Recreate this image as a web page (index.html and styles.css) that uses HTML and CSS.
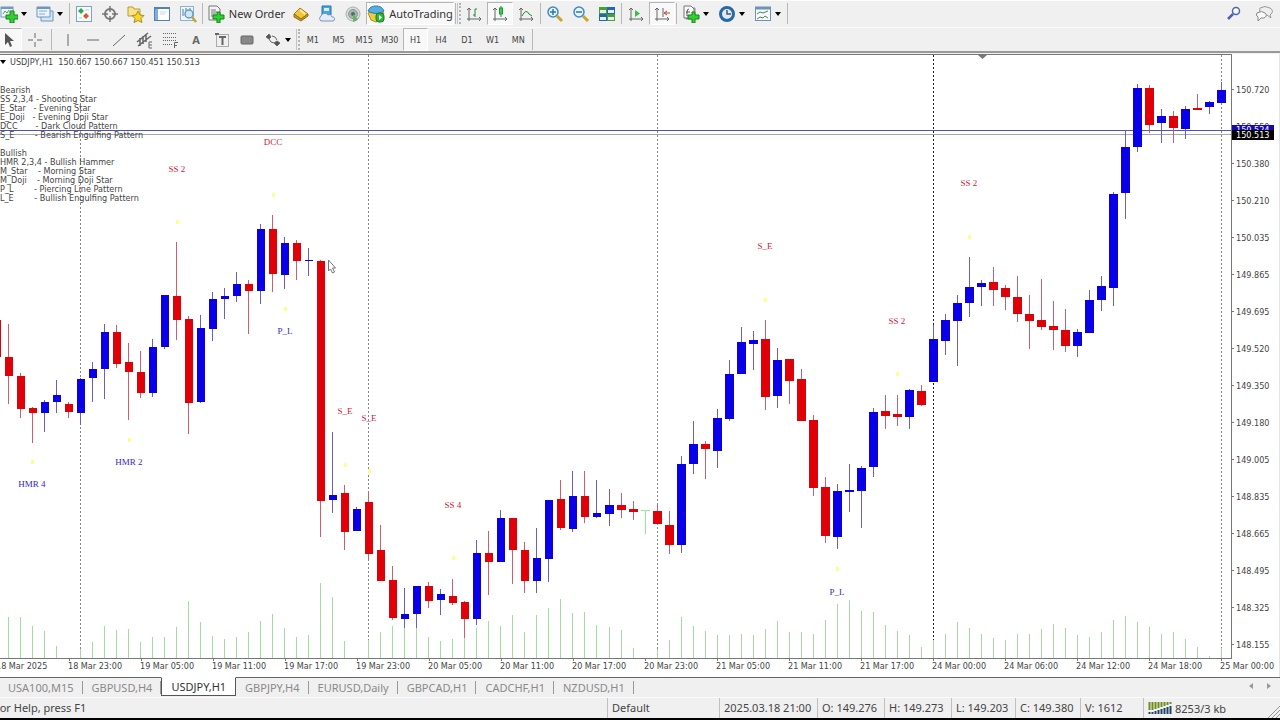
FILE: index.html
```html
<!DOCTYPE html>
<html lang="en">

<head>
	<meta charset="utf-8">
	<title>USDJPY,H1</title>
	<link rel="stylesheet" href="styles.css">
</head>

<body>
	<div class="toolbar toolbar-main">
		<div class="group">
			<button class="tool drop" aria-label="New chart">
				<svg class="icon" viewBox="0 0 18 18"><rect x="1" y="2" width="12" height="10" fill="#eef6fc" stroke="#6f9cc0"/><path d="M1 3h12" stroke="#6f9cc0" stroke-width="2"/><path d="M3 9l2-3 2 2 2-3" fill="none" stroke="#5b9a4a"/><path d="M10 6h4v4h4v4h-4v4h-4v-4H6v-4h4z" fill="#2fd02f" stroke="#14851c"/></svg>
				<svg class="arrow" viewBox="0 0 6 4"><path d="M0 0h6L3 4z"/></svg>
			</button>
			<button class="tool drop" aria-label="Profiles">
				<svg class="icon" viewBox="0 0 18 18"><path d="M5 6h12v10H5z" fill="#d4e6f5" stroke="#6b97bd"/><path d="M1 2h13v10H1z" fill="#eaf4fc" stroke="#6b97bd"/><path d="M1 3h13" stroke="#6b97bd" stroke-width="2"/><path d="M3 6h8M3 9h6" stroke="#8aabc7"/></svg>
				<svg class="arrow" viewBox="0 0 6 4"><path d="M0 0h6L3 4z"/></svg>
			</button>
		</div>
		<span class="sep"></span>
		<div class="group">
			<button class="tool" aria-label="Market Watch"><svg class="icon" viewBox="0 0 18 18"><rect x="1.500" y="1.500" width="15" height="15" fill="#f8fcff" stroke="#7ba5c8"/><path d="M6 3l3 3-3 3-3-3z" fill="#35a84a"/><path d="M11 8l3 3-3 3-3-3z" fill="#e2502c"/><path d="M10 5h4M4 13h3" stroke="#b8cfe0"/></svg></button>
			<button class="tool" aria-label="Data Window"><svg class="icon" viewBox="0 0 18 18"><circle cx="9" cy="9" r="5" fill="none" stroke="#777" stroke-width="2"/><path d="M9 1v6M9 11v6M1 9h6M11 9h6" stroke="#777" stroke-width="1.500"/></svg></button>
			<button class="tool" aria-label="Navigator"><svg class="icon" viewBox="0 0 18 18"><path d="M1 2h5l1 2h6v7H1z" fill="#f6e38c" stroke="#bc9a38"/><path d="M11 6l2 4 4 .5-3 3 1 4-4-2-4 2 1-4-3-3 4-.5z" fill="#f5d62b" stroke="#b08b16"/></svg></button>
			<button class="tool" aria-label="Terminal"><svg class="icon" viewBox="0 0 18 18"><rect x="1.500" y="2.500" width="15" height="13" fill="#fff" stroke="#4d83b5"/><path d="M1 3h16" stroke="#4d83b5" stroke-width="2"/><path d="M2 4h3v11H2z" fill="#7fb0dc"/><path d="M7 7h7M7 9h5" stroke="#c6d8e6"/></svg></button>
			<button class="tool" aria-label="Strategy Tester"><svg class="icon" viewBox="0 0 18 18"><rect x="1.500" y="1.500" width="13" height="14" fill="#eef5fb" stroke="#8fb1cc"/><path d="M4 4v7M7 3v3M11 3v3" stroke="#4e7fa8"/><circle cx="10" cy="9" r="4" fill="#cfe6f5" stroke="#6c9abd" stroke-width="1.500"/><path d="M13 12l4 5" stroke="#c7a338" stroke-width="2.500"/></svg></button>
		</div>
		<span class="sep"></span>
		<button class="tool labelled"><svg class="icon" viewBox="0 0 18 18"><path d="M2 1h8l3 3v11H2z" fill="#f4f4f4" stroke="#777"/><path d="M4 5h5M4 7h6M4 9h5M4 11h3" stroke="#777"/><path d="M10 7h3v3h4v4h-4v4h-3v-4H6v-4h4z" fill="#2fd02f" stroke="#14851c"/></svg>New Order</button>
		<div class="group">
			<button class="tool" aria-label="MetaEditor"><svg class="icon" viewBox="0 0 18 18"><path d="M2 9l6-6 8 6-7 5z" fill="#efc63a" stroke="#a87d16"/><path d="M2 9v3l7 4 7-5V9l-7 5z" fill="#c9981f" stroke="#94701a"/><path d="M8 5l5 4" stroke="#fbe99a" stroke-width="2"/></svg></button>
			<button class="tool" aria-label="Options"><svg class="icon" viewBox="0 0 18 18"><path d="M4 1h9v9H4z" fill="#4aa3e0" stroke="#2673ad"/><path d="M6 3h5v3H6z" fill="#d3edfc"/><path d="M3 16a3 3 0 0 1 0-5 4 4 0 0 1 7-1 3 3 0 0 1 4 2 2 2 0 0 1 1 4z" fill="#e4edf6" stroke="#7896b8"/></svg></button>
			<button class="tool" aria-label="Signals"><svg class="icon" viewBox="0 0 18 18"><circle cx="9" cy="9" r="7" fill="#d7dcdc" stroke="#aab2b2"/><circle cx="9" cy="9" r="4.500" fill="#a7b4b0" stroke="#8c9895"/><circle cx="9" cy="9" r="2" fill="#4a6b72"/><path d="M9 9v8a7 7 0 0 0 5-3z" fill="#6db06a"/></svg></button>
		</div>
		<button class="tool labelled auto pressed"><svg class="icon" viewBox="0 0 18 18"><path d="M1 8l8-3 8 3-3 7-5 2-5-2z" fill="#f0cb3c" stroke="#b28f22"/><path d="M1 6q2-5 8-5t8 5q-8 5-16 0z" fill="#57aee0" stroke="#2d7ab0"/><rect x="9" y="8" width="8" height="9" rx="3" fill="#2eb53a" stroke="#16802a"/><path d="M12 10v5l3-2.500z" fill="#fff"/></svg>AutoTrading</button>
		<span class="sep"></span>
		<span class="grip"></span>
		<div class="group">
			<button class="tool" aria-label="Bar Chart"><svg class="icon line" viewBox="0 0 18 18"><path d="M4 3v13M2 14h14M2 5l2-2 2 2M14 12l2 2-2 2"/><path class="green" d="M10 4v8M12 4h-2M10 10H8"/></svg></button>
			<button class="tool pressed" aria-label="Candlesticks"><svg class="icon line" viewBox="0 0 18 18"><path d="M4 3v13M2 14h14M2 5l2-2 2 2M14 12l2 2-2 2"/><path class="green" d="M10 1v11"/><rect x="8.500" y="3" width="3" height="6" fill="#36cf46" stroke="#1b9c2b"/></svg></button>
			<button class="tool" aria-label="Line Chart"><svg class="icon line" viewBox="0 0 18 18"><path d="M4 3v13M2 14h14M2 5l2-2 2 2M14 12l2 2-2 2"/><path class="green" d="M5 11q4-8 7-2l3 2"/></svg></button>
		</div>
		<span class="sep"></span>
		<div class="group">
			<button class="tool" aria-label="Zoom In"><svg class="icon" viewBox="0 0 18 18"><path d="M11 11l5 5" stroke="#c9a52e" stroke-width="3"/><circle cx="7" cy="7" r="5" fill="#e7f4fd" stroke="#3f8ac4" stroke-width="1.500"/><path d="M4 7h6M7 4v6" stroke="#2878b8" stroke-width="1.500"/></svg></button>
			<button class="tool" aria-label="Zoom Out"><svg class="icon" viewBox="0 0 18 18"><path d="M11 11l5 5" stroke="#c9a52e" stroke-width="3"/><circle cx="7" cy="7" r="5" fill="#e7f4fd" stroke="#3f8ac4" stroke-width="1.500"/><path d="M4 7h6" stroke="#2878b8" stroke-width="1.500"/></svg></button>
			<button class="tool" aria-label="Tile Windows"><svg class="icon" viewBox="0 0 18 18"><path d="M1 2h8v7H1zM9 9h8v7H9z" fill="#48a03a"/><path d="M9 2h8v7H9zM1 9h8v7H1z" fill="#2c64b4"/><path d="M2 5h6v3H2zM10 5h6v3h-6zM2 12h6v3H2zM10 12h6v3h-6z" fill="#e5f2ea"/></svg></button>
		</div>
		<span class="sep"></span>
		<div class="group">
			<button class="tool" aria-label="Auto Scroll"><svg class="icon line" viewBox="0 0 18 18"><path d="M4 3v13M2 14h14M2 5l2-2 2 2M14 12l2 2-2 2"/><path d="M8 5v7l5-3.500z" fill="#36c046" stroke="none"/></svg></button>
			<button class="tool pressed" aria-label="Chart Shift"><svg class="icon line" viewBox="0 0 18 18"><path d="M4 3v13M2 14h14M2 5l2-2 2 2M14 12l2 2-2 2M10 3v9"/><path d="M17 8h-5M14 6l-3 2 3 2" stroke="#b0452c"/></svg></button>
		</div>
		<span class="sep"></span>
		<div class="group">
			<button class="tool drop" aria-label="Indicators">
				<svg class="icon" viewBox="0 0 18 18"><path d="M4 3h9v11H4z" fill="#ddd" stroke="#888"/><path d="M2 1h7l3 3v9H2z" fill="#fafafa" stroke="#777"/><path d="M7 4q-2 0-2 3v4M4 7h4" fill="none" stroke="#555"/><path d="M10 7h3v3h4v4h-4v4h-3v-4H6v-4h4z" fill="#2fd02f" stroke="#14851c"/></svg>
				<svg class="arrow" viewBox="0 0 6 4"><path d="M0 0h6L3 4z"/></svg>
			</button>
			<button class="tool drop" aria-label="Periods">
				<svg class="icon" viewBox="0 0 18 18"><circle cx="9" cy="9" r="6.500" fill="#dcecf8" stroke="#2668a8" stroke-width="3"/><path d="M9 5v4h4" fill="none" stroke="#555" stroke-width="1.500"/></svg>
				<svg class="arrow" viewBox="0 0 6 4"><path d="M0 0h6L3 4z"/></svg>
			</button>
			<button class="tool drop" aria-label="Templates">
				<svg class="icon" viewBox="0 0 18 18"><rect x="1.500" y="2.500" width="15" height="13" fill="#f6fafd" stroke="#6a93b5"/><path d="M1 3h16" stroke="#6a93b5" stroke-width="3"/><path d="M3 9l3-2 3 1 5-2M3 14l3-2 3 1 2-2 3 2" fill="none" stroke="#56805a"/></svg>
				<svg class="arrow" viewBox="0 0 6 4"><path d="M0 0h6L3 4z"/></svg>
			</button>
		</div>
		<span class="sep"></span>
		<div class="group right">
			<button class="tool" aria-label="Search"><svg class="icon" viewBox="0 0 18 18"><circle cx="11" cy="6" r="3.500" fill="#fff" stroke="#4c62b8" stroke-width="1.500"/><path d="M8 9l-5 5" stroke="#4c62b8" stroke-width="2.500"/></svg></button>
			<button class="tool" aria-label="Chat"><svg class="icon" viewBox="0 0 18 18"><path d="M5 3q5-3 10 0t0 7l1 3-4-3Q3 10 5 3z" fill="#eee" stroke="#999"/><path d="M2 8q5-3 8 0t-1 5H6l-3 3v-4q-3-2-1-4z" fill="#fafafa" stroke="#888"/></svg></button>
		</div>
	</div>

	<div class="toolbar toolbar-draw">
		<div class="group">
			<button class="tool pressed" aria-label="Cursor"><svg class="icon" viewBox="0 0 18 18"><path d="M5 2v12l3-3 2 5 2-1-2-5h4z" fill="#555"/></svg></button>
			<button class="tool" aria-label="Crosshair"><svg class="icon line" viewBox="0 0 18 18"><path d="M9 2v5M9 11v5M2 9h5M11 9h5"/></svg></button>
		</div>
		<span class="sep wide"></span>
		<div class="group draw-tools">
			<button class="tool" aria-label="Vertical Line"><svg class="icon line" viewBox="0 0 18 18"><path d="M9 3v12"/></svg></button>
			<button class="tool" aria-label="Horizontal Line"><svg class="icon line" viewBox="0 0 18 18"><path d="M3 9h12"/></svg></button>
			<button class="tool" aria-label="Trendline"><svg class="icon line" viewBox="0 0 18 18"><path d="M3 15L15 4"/></svg></button>
			<button class="tool" aria-label="Equidistant Channel"><svg class="icon line" viewBox="0 0 18 18"><path d="M1 11L12 2M2 15L15 5M4 7v8M7 5v8M10 3v8" stroke-width="1.500"/><path d="M16 11h-3v6h3M13 14h3"/></svg></button>
			<button class="tool" aria-label="Fibonacci"><svg class="icon line" viewBox="0 0 18 18"><path stroke-dasharray="1 1" d="M2 2.500h14M2 6.500h14M2 9.500h14M2 13.500h9"/><path d="M13.500 17v-5.500H17M13 14.500h3"/></svg></button>
			<button class="tool letter" aria-label="Text">A</button>
			<button class="tool" aria-label="Text Label"><svg class="icon line" viewBox="0 0 18 18"><rect x="3.500" y="3.500" width="12" height="12" stroke-dasharray="1 1"/><path d="M2 3h4M6 6h7M9.500 6v8" stroke-width="2"/></svg></button>
			<button class="tool" aria-label="Rectangle"><svg class="icon" viewBox="0 0 18 18"><rect x="3" y="5" width="12" height="8" rx="1" fill="#888" stroke="#666"/></svg></button>
		</div>
		<button class="tool drop" aria-label="Arrows">
			<svg class="icon line" viewBox="0 0 18 18"><path d="M2 6l3-3 2 3-2 2zM10 12l3-2 3 2-3 3z" fill="#555"/><path d="M5 8l2 3 3 1M8 5l3 1 2 3"/></svg>
			<svg class="arrow" viewBox="0 0 6 4"><path d="M0 0h6L3 4z"/></svg>
		</button>
		<span class="grip"></span>
		<div class="group timeframes">
			<button class="tool">M1</button>
			<button class="tool">M5</button>
			<button class="tool">M15</button>
			<button class="tool">M30</button>
			<button class="tool pressed">H1</button>
			<button class="tool">H4</button>
			<button class="tool">D1</button>
			<button class="tool">W1</button>
			<button class="tool">MN</button>
		</div>
		<span class="sep"></span>
	</div>

	<main class="chart">
		<div class="plot">
			<svg id="candles" class="candles" role="img" aria-label="USDJPY hourly candles"></svg>
			<div class="quote"><svg class="arrow" viewBox="0 0 6 4"><path d="M0 0h6L3 4z"/></svg>USDJPY,H1&nbsp; 150.667 150.667 150.451 150.513</div>
			<pre class="legend">Bearish
SS 2,3,4 - Shooting Star
E_Star   - Evening Star
E_Doji   - Evening Doji Star
DCC       - Dark Cloud Pattern
S_E        - Bearish Engulfing Pattern

Bullish
HMR 2,3,4 - Bullish Hammer
M_Star    - Morning Star
M_Doji    - Morning Doji Star
P_L        - Piercing Line Pattern
L_E        - Bullish Engulfing Pattern</pre>
		</div>
		<div class="prices">
			<span>150.720</span>
			<span>150.550</span>
			<span>150.380</span>
			<span>150.210</span>
			<span>150.035</span>
			<span>149.865</span>
			<span>149.695</span>
			<span>149.520</span>
			<span>149.350</span>
			<span>149.180</span>
			<span>149.005</span>
			<span>148.835</span>
			<span>148.665</span>
			<span>148.495</span>
			<span>148.325</span>
			<span>148.155</span>
			<b class="mark ask">150.524</b>
			<b class="mark bid">150.513</b>
		</div>
		<div class="times">
			<span>18 Mar 2025</span>
			<span>18 Mar 23:00</span>
			<span>19 Mar 05:00</span>
			<span>19 Mar 11:00</span>
			<span>19 Mar 17:00</span>
			<span>19 Mar 23:00</span>
			<span>20 Mar 05:00</span>
			<span>20 Mar 11:00</span>
			<span>20 Mar 17:00</span>
			<span>20 Mar 23:00</span>
			<span>21 Mar 05:00</span>
			<span>21 Mar 11:00</span>
			<span>21 Mar 17:00</span>
			<span>24 Mar 00:00</span>
			<span>24 Mar 06:00</span>
			<span>24 Mar 12:00</span>
			<span>24 Mar 18:00</span>
			<span>25 Mar 00:00</span>
		</div>
	</main>

	<nav class="tabs">
		<button class="tab">USA100,M15</button>
		<button class="tab">GBPUSD,H4</button>
		<button class="tab active">USDJPY,H1</button>
		<button class="tab">GBPJPY,H4</button>
		<button class="tab">EURUSD,Daily</button>
		<button class="tab">GBPCAD,H1</button>
		<button class="tab">CADCHF,H1</button>
		<button class="tab">NZDUSD,H1</button>
		<div class="scrollers">
			<button aria-label="Scroll left"><svg viewBox="0 0 4 6"><path d="M4 0v6L0 3z"/></svg></button>
			<button aria-label="Scroll right"><svg viewBox="0 0 4 6"><path d="M0 0v6l4-3z"/></svg></button>
		</div>
	</nav>

	<footer class="status">
		<span class="help">For Help, press F1</span>
		<span>Default</span>
		<span>2025.03.18 21:00</span>
		<span>O: 149.276</span>
		<span>H: 149.273</span>
		<span>L: 149.203</span>
		<span>C: 149.380</span>
		<span>V: 1612</span>
		<span class="traffic">
			<svg viewBox="0 0 24 14"><path d="M1.500 1v8M4.500 1v8M7.500 1v7M10.500 1v6M13.500 1v5M16.500 1v4M19.500 1v3M22.500 1v2" stroke="#6f8a1e" stroke-width="2"/><path d="M1.500 11v2M4.500 11v2M7.500 10v3M10.500 9v4M13.500 8v5M16.500 7v6M19.500 6v7M22.500 5v8" stroke="#1f4664" stroke-width="2"/></svg>
			8253/3 kb
			<svg class="resize" viewBox="0 0 12 12"><path d="M0 12L12 0M4 12l8-8M8 12l4-4"/></svg>
		</span>
	</footer>

	<script src="script.js"></script>
</body>

</html>
```

FILE: styles.css
```css
* {
	box-sizing: border-box;
}

body {
	margin: 0;
	height: 100vh;
	display: flex;
	flex-direction: column;
	overflow: hidden;
	background-color: #f0f0f0;
	border-bottom: 2px solid #000;
	font-family: "Noto Sans", "Open Sans", sans-serif;
	font-size: 11px;
	color: #444;
}

button {
	font: inherit;
	color: inherit;
	background: none;
	border: 0;
	padding: 0;
	margin: 0;
}

/* toolbars */

.toolbar {
	display: flex;
	align-items: center;
	padding-right: 3px;
	flex-shrink: 0;
}

.toolbar-main {
	height: 27px;
	padding-bottom: 1px;
	border-top: 1px solid #fff;
}

.toolbar-draw {
	height: 26px;
	border-bottom: 2px solid #9c9896;
	border-top: 1px solid #fafafa;
}

.toolbar > :first-child {
	margin-left: -4px;
}

.group {
	display: flex;
}

.group.right {
	margin-left: auto;
	gap: 4px;
}

.tool {
	width: 26px;
	height: 23px;
	display: flex;
	align-items: center;
	justify-content: center;
	border: 1px solid transparent;
	flex-shrink: 0;
}

.tool.pressed {
	background-color: #f8f8f8;
	border-color: #b4b4b4 #fff #fff #b4b4b4;
}

.tool.drop {
	width: 36px;
	justify-content: flex-start;
	padding-left: 3px;
	gap: 3px;
}

.tool.labelled {
	width: 84px;
	gap: 4px;
	color: #333;
	white-space: nowrap;
}

.tool.auto {
	width: 88px;
}

.tool.letter {
	font-weight: bold;
	color: #666;
}

.icon {
	width: 18px;
	height: 18px;
	flex-shrink: 0;
}

.icon.line {
	fill: none;
	stroke: #666;
}

.icon .green {
	stroke: #1f8a35;
}

.arrow {
	width: 6px;
	height: 4px;
	flex-shrink: 0;
}

.sep {
	width: 1px;
	height: 21px;
	margin: 0 1px;
	background-color: #b8b8b8;
	flex-shrink: 0;
}

.sep.wide {
	margin: 0 3px;
}

.grip {
	width: 4px;
	height: 21px;
	border-left: 1px solid #c4c4c4;
	border-right: 2px dotted #b4b4b4;
	flex-shrink: 0;
}

.draw-tools {
	width: 205px;
}

.timeframes {
	width: 231px;
	font-family: "DejaVu Sans Condensed", "DejaVu Sans", sans-serif;
	font-size: 9px;
}

.draw-tools .tool,
.timeframes .tool {
	flex: 1;
	width: auto;
}

/* chart */

.chart {
	flex: 1;
	min-height: 0;
	margin-top: 1px;
	display: grid;
	grid-template-columns: 1fr 47px;
	grid-template-rows: 1fr 18px;
	background-color: #fff;
	border-right: 1px solid #e4e4e4;
	font-family: "DejaVu Sans Condensed", "DejaVu Sans", sans-serif;
	font-size: 9px;
}

.plot {
	position: relative;
	min-height: 0;
	overflow: hidden;
	border-top: 1px solid #777;
	border-right: 1px solid #777;
	border-bottom: 1px solid #777;
}

.candles {
	display: block;
	width: 100%;
	height: 100%;
}

.up {
	fill: #0a00e8;
	stroke: #0a00e8;
}

.down {
	fill: #e00008;
	stroke: #e00008;
}

.flat {
	fill: #90ee90;
	stroke: #90ee90;
}

.wick {
	fill: none;
	stroke: #6a60c0;
}

.wick.down {
	stroke: #c86070;
}

.wick.flat {
	stroke: #90ee90;
}

.body {
	stroke: none;
}

.volume {
	stroke: #a6d9a6;
}

.day {
	stroke: #888;
	stroke-dasharray: 2 2;
}

.day.week {
	stroke: #222;
}

.ask-line {
	stroke: #5252b0;
}

.bid-line {
	stroke: #a0a8b8;
}

.pattern {
	font-family: "Liberation Serif", serif;
	font-size: 9px;
	text-anchor: middle;
}

.bearish {
	fill: #d02040;
}

.bullish {
	fill: #3828b8;
}

.signal {
	fill: #ffff90;
}

.shift {
	fill: #777;
}

.pointer {
	fill: #fff;
	stroke: #777;
}

.quote {
	position: absolute;
	top: 1px;
	left: 0;
	display: flex;
	align-items: center;
	gap: 4px;
	line-height: 12px;
	white-space: nowrap;
}

.legend {
	position: absolute;
	top: 31px;
	left: 0;
	margin: 0;
	font-family: inherit;
	line-height: 9px;
}

.prices {
	position: relative;
	min-height: 0;
	padding-top: 17px;
}

.prices span {
	display: flex;
	align-items: center;
	height: 37px;
}

.prices span::before {
	content: "";
	width: 2px;
	height: 1px;
	margin-right: 2px;
	background-color: #777;
}

.mark {
	position: absolute;
	left: 0;
	width: 42px;
	height: 10px;
	padding-left: 4px;
	line-height: 10px;
	font-weight: normal;
	color: #fff;
}

.ask {
	top: 71px;
	background-color: #1408b0;
}

.bid {
	top: 76px;
	background-color: #000;
}

.times {
	grid-column: 1 / 3;
	display: flex;
	margin-left: -3px;
	overflow: hidden;
}

.times span {
	position: relative;
	width: 72px;
	flex-shrink: 0;
	line-height: 15px;
	text-indent: -1px;
	white-space: nowrap;
}

.times span::before {
	content: "";
	position: absolute;
	top: 0;
	left: 0;
	width: 1px;
	height: 2px;
	background-color: #777;
}

/* chart tabs */

.tabs {
	display: flex;
	height: 20px;
	flex-shrink: 0;
	margin-left: -1px;
	border-top: 1px solid #666;
	color: #8a8a8a;
}

.tab {
	height: 18px;
	padding: 0 9px;
	position: relative;
}

.tab::after {
	content: "";
	position: absolute;
	right: 0;
	top: 3px;
	width: 1px;
	height: 13px;
	background-color: #999;
}

.tab.active {
	height: 19px;
	margin-top: -1px;
	background-color: #fff;
	border: 1px solid #555;
	border-top-color: #fff;
	color: #333;
}

.tab.active::after {
	display: none;
}

.scrollers {
	display: flex;
	gap: 14px;
	margin-left: auto;
	padding-right: 9px;
	padding-bottom: 3px;
}

.scrollers svg {
	display: block;
	width: 4px;
	height: 6px;
	fill: #999;
}

/* status bar */

.status {
	display: grid;
	grid-template-columns: 1fr 112px 98px 67px 67px 64px 65px 63px 137px;
	height: 21px;
	flex-shrink: 0;
	border-top: 1px solid #fafafa;
	line-height: 19px;
	white-space: nowrap;
}

.status span {
	padding-left: 4px;
	border-left: 1px solid #c0c0c0;
}

.status .help {
	padding-left: 0;
	border-left: 0;
	text-indent: -6px;
	overflow: hidden;
}

.status .traffic {
	display: flex;
	align-items: center;
	gap: 3px;
}

.traffic svg {
	width: 24px;
	height: 14px;
}

.traffic .resize {
	width: 12px;
	height: 12px;
	margin-left: auto;
	align-self: flex-end;
	stroke: #999;
}
```

FILE: script.js
```js
var step = 12;
var firstX = -3;
var top0 = 55;

// direction, high, body top, body bottom, low, volume top
var candles = [
	['r', 320, 320, 357, 357, 0],
	['r', 324, 357, 376, 404, 617], ['r', 373, 376, 409, 418, 617], ['r', 407, 408, 413, 443, 626],
	['b', 400, 402, 413, 432, 631], ['b', 380, 395, 402, 413, 646], ['r', 402, 404, 412, 418, 0],
	['b', 378, 379, 413, 425, 649], ['b', 362, 369, 378, 402, 642], ['b', 324, 332, 369, 399, 626],
	['r', 325, 332, 364, 368, 630], ['r', 343, 362, 372, 420, 629], ['r', 351, 372, 393, 398, 642],
	['b', 339, 347, 393, 397, 637], ['b', 295, 295, 347, 349, 637], ['r', 242, 296, 320, 340, 627],
	['r', 316, 319, 403, 434, 601], ['b', 315, 328, 402, 403, 622], ['b', 292, 299, 329, 341, 636],
	['b', 288, 296, 299, 319, 639], ['b', 272, 284, 296, 302, 637], ['r', 280, 284, 291, 334, 632],
	['b', 224, 229, 291, 304, 621], ['r', 215, 229, 274, 292, 614], ['b', 237, 243, 275, 289, 628],
	['r', 240, 243, 261, 280, 637], ['b', 248, 260, 261, 276, 635], ['r', 260, 261, 501, 537, 583],
	['b', 432, 495, 500, 513, 597], ['r', 485, 493, 532, 550, 641], ['b', 507, 509, 531, 531, 0],
	['r', 492, 502, 554, 560, 640], ['r', 525, 550, 581, 581, 632], ['r', 566, 580, 618, 620, 626],
	['b', 588, 614, 619, 628, 628], ['b', 586, 586, 614, 628, 628], ['r', 582, 586, 601, 608, 637],
	['b', 589, 594, 600, 615, 641], ['r', 579, 596, 603, 605, 639], ['r', 601, 602, 619, 638, 638],
	['b', 540, 553, 619, 625, 628], ['r', 531, 553, 562, 595, 621], ['b', 510, 518, 562, 562, 626],
	['r', 518, 518, 550, 584, 615], ['r', 542, 550, 581, 593, 632], ['b', 528, 558, 581, 593, 615],
	['b', 500, 500, 559, 582, 608], ['r', 480, 499, 528, 530, 599], ['b', 471, 496, 529, 532, 613],
	['r', 471, 496, 517, 523, 612], ['b', 480, 513, 517, 518, 625], ['b', 489, 505, 514, 526, 627],
	['r', 493, 505, 510, 518, 630], ['r', 501, 509, 512, 520, 648], ['g', 511, 510, 511, 534, 0],
	['r', 505, 511, 524, 524, 649], ['r', 511, 525, 545, 554, 640], ['b', 456, 464, 545, 553, 617],
	['b', 421, 444, 464, 474, 626], ['r', 441, 444, 449, 479, 631], ['b', 409, 418, 451, 468, 635],
	['b', 360, 374, 419, 421, 635], ['b', 327, 342, 374, 374, 634], ['b', 331, 340, 344, 370, 635],
	['r', 320, 339, 397, 410, 629], ['b', 348, 360, 396, 408, 621], ['r', 359, 359, 381, 404, 632],
	['r', 369, 379, 421, 421, 632], ['r', 415, 420, 488, 496, 634], ['r', 477, 487, 536, 543, 620],
	['b', 484, 491, 537, 549, 604], ['b', 464, 490, 492, 512, 600], ['b', 466, 468, 491, 528, 611],
	['b', 408, 412, 467, 477, 612], ['r', 395, 411, 416, 429, 625], ['r', 395, 414, 417, 426, 631],
	['b', 389, 390, 417, 429, 635], ['r', 385, 391, 405, 406, 647], ['b', 325, 339, 382, 382, 640],
	['b', 314, 320, 341, 355, 634], ['b', 295, 303, 321, 366, 622], ['b', 257, 287, 303, 317, 628],
	['b', 280, 283, 287, 306, 634], ['r', 267, 282, 290, 306, 638], ['r', 285, 288, 297, 310, 640],
	['r', 276, 297, 314, 322, 634], ['r', 295, 314, 321, 349, 634], ['r', 279, 320, 327, 330, 629],
	['r', 301, 326, 330, 350, 624], ['r', 309, 330, 346, 352, 628], ['b', 329, 332, 346, 357, 635],
	['b', 290, 300, 333, 333, 637], ['b', 276, 286, 300, 311, 632], ['b', 192, 194, 288, 306, 620],
	['b', 130, 147, 193, 219, 616], ['b', 84, 88, 147, 152, 622], ['r', 85, 88, 125, 133, 627],
	['b', 109, 116, 123, 143, 634], ['r', 111, 116, 128, 143, 632], ['b', 106, 109, 129, 139, 639],
	['r', 94, 108, 110, 110, 647], ['b', 101, 102, 107, 114, 656], ['b', 82, 90, 103, 103, 648]
];

// text, side, x, text y, signal y
var patterns = [
	['HMR 4', 'bullish', 32, 484, 462], ['HMR 2', 'bullish', 129, 462, 440],
	['SS 2', 'bearish', 177, 169, 222], ['DCC', 'bearish', 273, 142, 195],
	['P_L', 'bullish', 285, 331, 309], ['S_E', 'bearish', 345, 411, 465],
	['S_E', 'bearish', 369, 418, 471], ['SS 4', 'bearish', 453, 505, 558],
	['S_E', 'bearish', 765, 246, 300], ['P_L', 'bullish', 837, 592, 569],
	['SS 2', 'bearish', 897, 321, 374], ['SS 2', 'bearish', 969, 183, 237]
];

var days = [80, 368, 657, 933, 1221];
var names = { r: 'down', b: 'up', g: 'flat' };
var svg = document.getElementById('candles');

function draw(tag, cls, attrs) {
	var el = document.createElementNS('http://www.w3.org/2000/svg', tag);
	el.setAttribute('class', cls);
	for (var key in attrs) {
		el.setAttribute(key, attrs[key]);
	}
	svg.appendChild(el);
	return el;
}

function vertical(cls, x, y1, y2) {
	draw('line', cls, { x1: x + 0.5, x2: x + 0.5, y1: y1 - top0, y2: y2 - top0 });
}

function horizontal(cls, y) {
	draw('line', cls, { x1: 0, x2: '100%', y1: y - top0 + 0.5, y2: y - top0 + 0.5 });
}

for (var i = 0; i < days.length; i++) {
	vertical(days[i] == 933 ? 'day week' : 'day', days[i], 55, 658);
}

horizontal('ask-line', 130);
horizontal('bid-line', 134);

for (var i = 0; i < candles.length; i++) {
	var c = candles[i];
	var x = firstX + i * step;
	var mid = x < 600 ? x - 1 : x;
	if (c[5]) {
		vertical('volume', mid, c[5], 658);
	}
	vertical('wick ' + names[c[0]], mid, c[1], c[4]);
	draw('rect', 'body ' + names[c[0]], { x: x - 4, y: c[2] - top0, width: mid == x ? 9 : 8, height: Math.max(c[3] - c[2], 1) });
}

for (var i = 0; i < patterns.length; i++) {
	var p = patterns[i];
	draw('text', 'pattern ' + p[1], { x: p[2], y: p[3] - top0 + 3 }).textContent = p[0];
	draw('rect', 'signal', { x: p[2] - 1, y: p[4] - top0 - 2, width: 3, height: 4 });
}

draw('path', 'shift', { d: 'M978 0h9l-4.5 4z' });
draw('path', 'pointer', { d: 'M328.5 205v11l2-2 2 4 2-1-2-4h3z' });
```
